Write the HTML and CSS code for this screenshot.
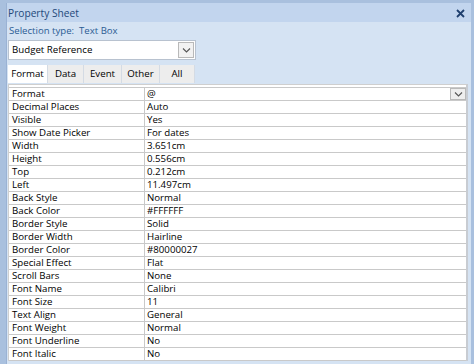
FILE: index.html
```html
<!DOCTYPE html>
<html>
<head>
<meta charset="utf-8">
<link rel="stylesheet" href="styles.css">
</head>
<body>
<div class="frame">
  <div class="panel">
    <div class="titlebar">
      <span class="title">Property Sheet</span>
      <svg class="close" width="9" height="9" viewBox="0 0 9 9"><path d="M1 1L8 8M8 1L1 8" stroke="#1e3f6e" stroke-width="1.8"/></svg>
    </div>
    <div class="body">
      <div class="seltype">Selection type:&nbsp; Text Box</div>
      <div class="combo">
        <span class="combo-text">Budget Reference</span>
        <span class="combo-btn"><svg width="9" height="5" viewBox="0 0 9 5"><path d="M1 0.5L4.5 4L8 0.5" fill="none" stroke="#555" stroke-width="1.1"/></svg></span>
      </div>
      <div class="tabs">
        <span class="tab active">Format</span>
        <span class="tab t-data">Data</span>
        <span class="tab t-event">Event</span>
        <span class="tab t-other">Other</span>
        <span class="tab t-all">All</span>
      </div>
      <div class="grid">
        <div class="row"><span class="name">Format</span><span class="val">@<span class="vbtn"><svg width="9" height="5" viewBox="0 0 9 5"><path d="M1 0.5L4.5 4L8 0.5" fill="none" stroke="#555" stroke-width="1.1"/></svg></span></span></div>
        <div class="row"><span class="name">Decimal Places</span><span class="val">Auto</span></div>
        <div class="row"><span class="name">Visible</span><span class="val">Yes</span></div>
        <div class="row"><span class="name">Show Date Picker</span><span class="val">For dates</span></div>
        <div class="row"><span class="name">Width</span><span class="val">3.651cm</span></div>
        <div class="row"><span class="name">Height</span><span class="val">0.556cm</span></div>
        <div class="row"><span class="name">Top</span><span class="val">0.212cm</span></div>
        <div class="row"><span class="name">Left</span><span class="val">11.497cm</span></div>
        <div class="row"><span class="name">Back Style</span><span class="val">Normal</span></div>
        <div class="row"><span class="name">Back Color</span><span class="val">#FFFFFF</span></div>
        <div class="row"><span class="name">Border Style</span><span class="val">Solid</span></div>
        <div class="row"><span class="name">Border Width</span><span class="val">Hairline</span></div>
        <div class="row"><span class="name">Border Color</span><span class="val">#80000027</span></div>
        <div class="row"><span class="name">Special Effect</span><span class="val">Flat</span></div>
        <div class="row"><span class="name">Scroll Bars</span><span class="val">None</span></div>
        <div class="row"><span class="name">Font Name</span><span class="val">Calibri</span></div>
        <div class="row"><span class="name">Font Size</span><span class="val">11</span></div>
        <div class="row"><span class="name">Text Align</span><span class="val">General</span></div>
        <div class="row"><span class="name">Font Weight</span><span class="val">Normal</span></div>
        <div class="row"><span class="name">Font Underline</span><span class="val">No</span></div>
        <div class="row"><span class="name">Font Italic</span><span class="val">No</span></div>
      </div>
    </div>
  </div>
</div>
</body>
</html>
```

FILE: styles.css
```css
* { box-sizing: border-box; }
html, body { margin: 0; padding: 0; }
body {
  width: 474px;
  height: 364px;
  overflow: hidden;
  background: #a9c0de;
  font-family: "Open Sans", "Noto Sans", sans-serif;
  font-size: 9.7px;
  color: #000;
}
.frame {
  height: 364px;
  padding: 3px 3px 0 6px;
  background: #a9c0de;
}
.panel {
  height: 361px;
  border-left: 1px solid #9ab2d4;
  background: #d5e3f3;
  display: flex;
  flex-direction: column;
}
.titlebar {
  height: 19px;
  background: #c2d5ee;
  display: flex;
  align-items: center;
  justify-content: space-between;
  padding: 1px 6px 0 1px;
}
.title {
  font-size: 10.2px;
  color: #24497a;
  line-height: 18px;
}
.close { display: block; }
.body {
  padding: 0 3px 0 1px;
  flex: 1;
  display: flex;
  flex-direction: column;
}
.seltype {
  color: #2b5c94;
  font-size: 9.6px;
  line-height: 14px;
  padding: 2px 0 0 1px;
  height: 18px;
}
.combo {
  width: 188px;
  height: 20px;
  background: #fff;
  border: 1px solid #b8c2cf;
  display: flex;
  align-items: center;
  justify-content: space-between;
  padding: 0 1px 0 3px;
}
.combo-text { line-height: 16px; }
.combo-btn {
  width: 16px;
  height: 16px;
  border: 1px solid #b9b9b9;
  background: #f2f2f2;
  display: flex;
  align-items: center;
  justify-content: center;
}
.tabs {
  margin-top: 5px;
  display: flex;
  height: 18px;
}
.tab {
  height: 18px;
  line-height: 18px;
  background: #ededed;
  border-right: 1px solid #d4dbe4;
  text-align: center;
}
.tab.active { background: #fff; width: 40px; }
.t-data { width: 36px; }
.t-event { width: 38px; }
.t-other { width: 38px; }
.t-all { width: 35px; }
.grid {
  margin-top: 1px;
  background: #fff;
  border: 1px solid #cfcfcf;
  border-bottom: none;
  border-right: 2px solid #c8ccd2;
  padding-top: 2px;
}
.row {
  display: flex;
  height: 13px;
  border-bottom: 1px solid #c9c9c9;
}
.row:first-child { border-top: 1px solid #c9c9c9; height: 14px; }
.name {
  width: 136px;
  border-right: 1px solid #c9c9c9;
  padding-left: 3px;
  line-height: 12px;
  white-space: nowrap;
}
.val {
  flex: 1;
  padding-left: 2px;
  line-height: 12px;
  display: flex;
  justify-content: space-between;
  white-space: nowrap;
}
.vbtn {
  width: 16px;
  height: 12px;
  border: 1px solid #b9b9b9;
  background: #eeeeee;
  display: flex;
  align-items: center;
  justify-content: center;
}
```
